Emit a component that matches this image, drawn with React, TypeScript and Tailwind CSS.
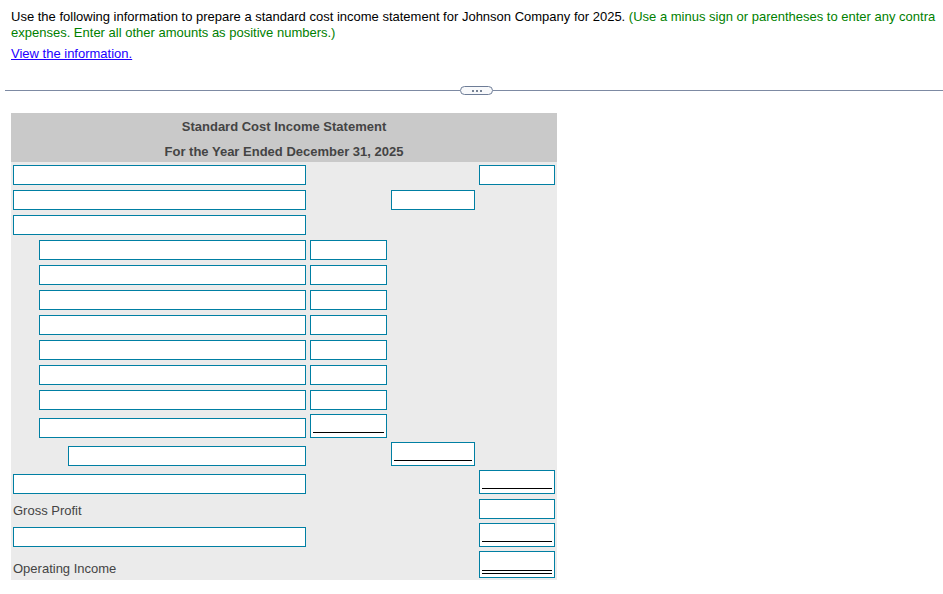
const labelCol = "w-[293px] shrink-0"

function Box({ className = "", line = 0 }: { className?: string; line?: 0 | 1 | 2 }) {
  return (
    <div
      className={`box-border flex flex-col justify-end border border-[#007fa3] bg-white px-[2px] ${
        line === 2 ? "pb-[3px]" : "pb-1"
      } ${className}`}
    >
      {line > 0 && <div className="h-px bg-black" />}
      {line === 2 && <div className="mt-[2px] h-px bg-black" />}
    </div>
  )
}

function Row({
  indent = "",
  label,
  text,
  textClass = "",
  col,
  line = 0,
  height = "h-5",
}: {
  indent?: string
  label?: boolean
  text?: string
  textClass?: string
  col?: 1 | 2 | 3
  line?: 0 | 1 | 2
  height?: string
}) {
  return (
    <div className={`flex items-end ${height}`}>
      <div className={`${labelCol} ${indent}`}>
        {label && <Box className="h-5 w-full" />}
        {text && <div className={`text-[13px] leading-5 text-[#444] ${textClass}`}>{text}</div>}
      </div>
      <div className="ml-1 w-[77px] shrink-0">{col === 1 && <Box line={line} className={`w-full ${height}`} />}</div>
      <div className="ml-1 w-[84px] shrink-0">{col === 2 && <Box line={line} className={`w-full ${height}`} />}</div>
      <div className="ml-1 w-[76px] shrink-0">{col === 3 && <Box line={line} className={`w-full ${height}`} />}</div>
    </div>
  )
}

export default function App() {
  return (
    <div className="h-[594px] w-[943px] overflow-hidden bg-white font-['Liberation_Sans',Arial,sans-serif] text-black">
      <div className="pl-[11px] pr-[6px] pt-[9px] text-[13px] leading-4">
        <p>
          Use the following information to prepare a standard cost income statement for Johnson Company for 2025.{" "}
          <span className="text-[#008000]">
            (Use a minus sign or parentheses to enter any contra expenses. Enter all other amounts as positive numbers.)
          </span>
        </p>
        <a href="#" className="mt-[5px] block text-[#2200ff] underline">
          View the information.
        </a>
      </div>

      <div className="ml-[5px] mt-[24px] flex h-[9px] items-center">
        <div className="h-px w-[455px] bg-[#7d8aa3]" />
        <div className="flex h-[9px] w-[33px] shrink-0 items-center justify-center gap-[2px] rounded-full border border-[#6d7c96] bg-[#f8f9fb]">
          <span className="size-[2px] rounded-full bg-[#4d5b73]" />
          <span className="size-[2px] rounded-full bg-[#4d5b73]" />
          <span className="size-[2px] rounded-full bg-[#4d5b73]" />
        </div>
        <div className="h-px flex-1 bg-[#7d8aa3]" />
      </div>

      <div className="ml-[11px] mt-[18px] w-[546px] bg-[#ebebeb]">
        <div className="h-[49px] bg-[#c9c9c9] pt-px text-center text-[13px] font-bold leading-[25px] text-[#444]">
          <div>Standard Cost Income Statement</div>
          <div>For the Year Ended December 31, 2025</div>
        </div>
        <div className="flex flex-col pb-[2px] pl-[2px] pt-[3px]">
          <Row label col={3} />
          <Row label col={2} height="mt-[5px] h-5" />
          <Row label height="mt-[5px] h-5" />
          <Row label indent="pl-[26px]" col={1} height="mt-[5px] h-5" />
          <Row label indent="pl-[26px]" col={1} height="mt-[5px] h-5" />
          <Row label indent="pl-[26px]" col={1} height="mt-[5px] h-5" />
          <Row label indent="pl-[26px]" col={1} height="mt-[5px] h-5" />
          <Row label indent="pl-[26px]" col={1} height="mt-[5px] h-5" />
          <Row label indent="pl-[26px]" col={1} height="mt-[5px] h-5" />
          <Row label indent="pl-[26px]" col={1} height="mt-[5px] h-5" />
          <Row label indent="pl-[26px]" col={1} line={1} height="mt-1 h-6" />
          <Row label indent="pl-[55px]" col={2} line={1} height="mt-1 h-6" />
          <Row label col={3} line={1} height="mt-1 h-6" />
          <Row text="Gross Profit" textClass="-mb-[2px]" col={3} height="mt-[5px] h-5" />
          <Row label col={3} line={1} height="mt-1 h-6" />
          <Row text="Operating Income" textClass="-mb-px" col={3} line={2} height="mt-1 h-[27px]" />
        </div>
      </div>
    </div>
  )
}
